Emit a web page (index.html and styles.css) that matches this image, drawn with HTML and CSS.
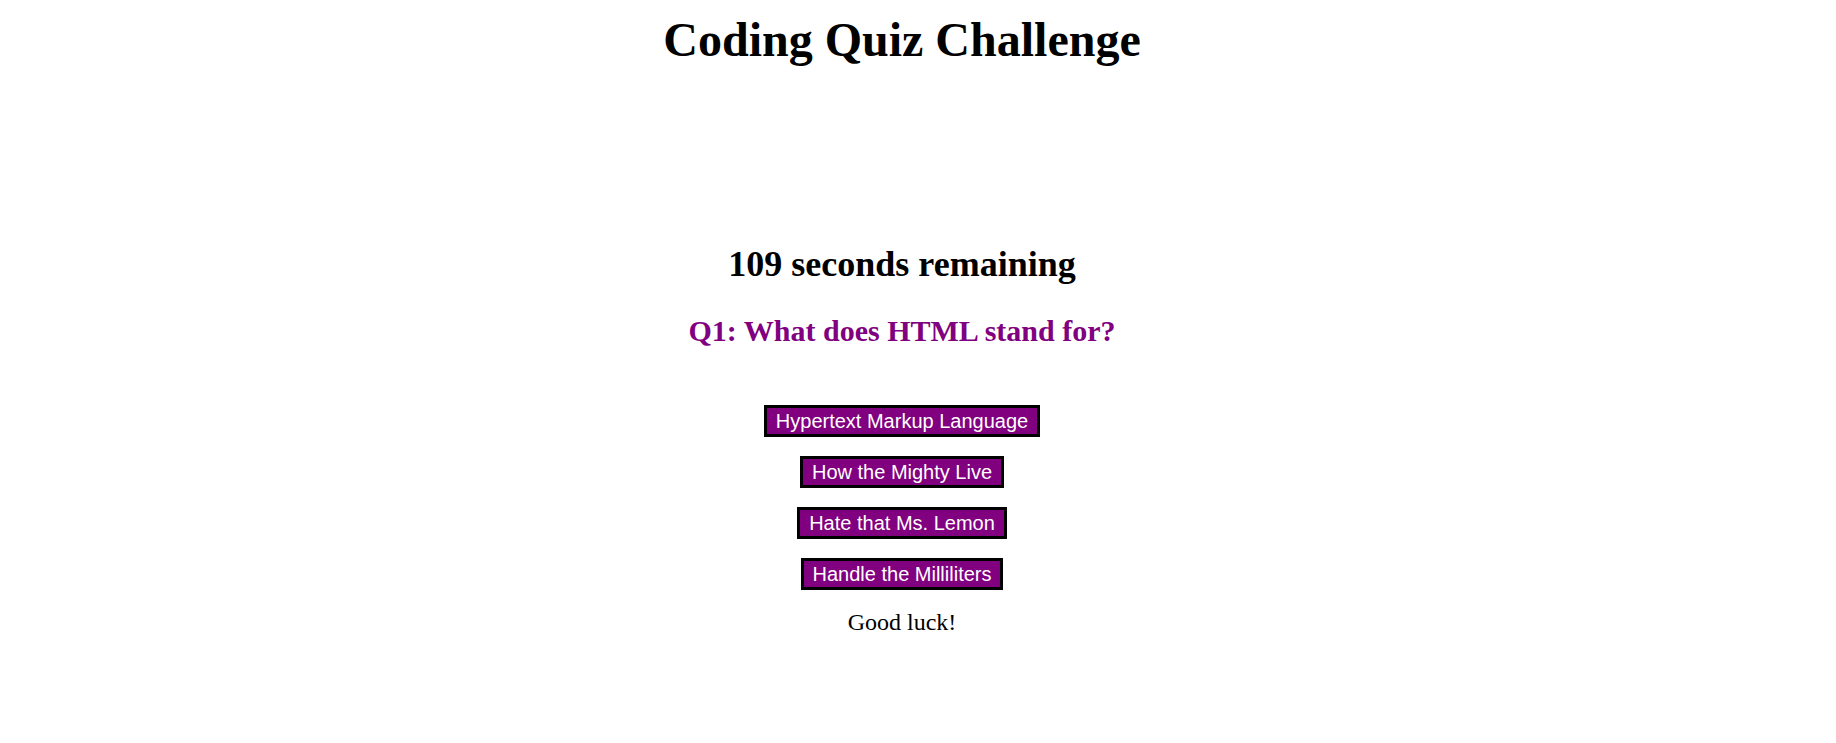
FILE: index.html
```html
<!DOCTYPE html>
<html lang="en">
<head>
<meta charset="utf-8">
<title>Coding Quiz Challenge</title>
<link rel="stylesheet" href="styles.css">
</head>
<body>
<main class="page">
  <h1 class="title">Coding Quiz Challenge</h1>
  <section class="quiz">
    <h2 class="timer">109 seconds remaining</h2>
    <h3 class="question">Q1: What does HTML stand for?</h3>
    <div class="answers">
      <button class="answer">Hypertext Markup Language</button>
      <button class="answer">How the Mighty Live</button>
      <button class="answer">Hate that Ms. Lemon</button>
      <button class="answer">Handle the Milliliters</button>
    </div>
    <p class="feedback">Good luck!</p>
  </section>
</main>
</body>
</html>
```
FILE: styles.css
```css
html, body {
  margin: 0;
  padding: 0;
  background: #ffffff;
}

body {
  font-family: "Liberation Serif", "Times New Roman", serif;
  color: #000;
}

.page {
  padding: 12px 44px 12px 12px;
  text-align: center;
}

.title {
  margin: 0;
  font-size: 48px;
  font-weight: bold;
  line-height: 55px;
}

.quiz {
  display: flex;
  flex-direction: column;
  align-items: center;
  padding-top: 177px;
}

.timer {
  margin: 0;
  font-size: 36px;
  font-weight: bold;
  line-height: 41px;
}

.question {
  margin: 29px 0 0;
  font-size: 30px;
  font-weight: bold;
  line-height: 34px;
  color: #800080;
}

.answers {
  display: flex;
  flex-direction: column;
  align-items: center;
  gap: 19px;
  margin-top: 57px;
}

.answer {
  font-family: "Liberation Sans", Arial, sans-serif;
  font-size: 20px;
  line-height: 23px;
  color: #ffffff;
  background: #800080;
  border: 3px solid #000;
  padding: 1.5px 9px;
  margin: 0;
  cursor: pointer;
}

.feedback {
  margin: 18px 0 0;
  font-size: 24px;
  line-height: 28px;
}
```
